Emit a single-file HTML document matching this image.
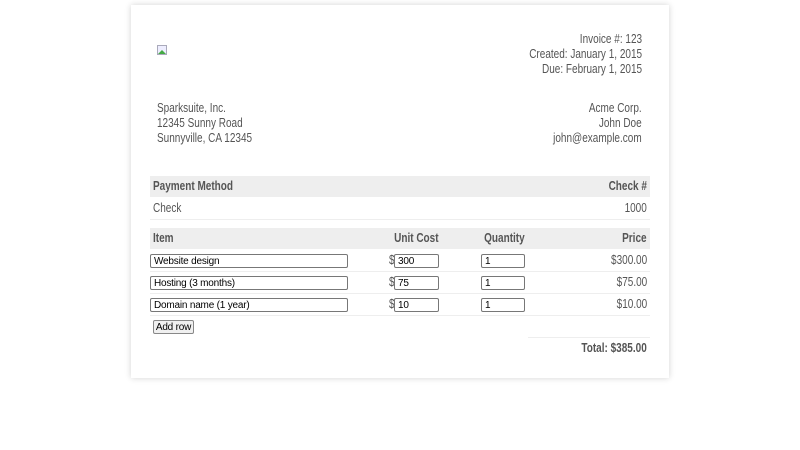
<!DOCTYPE html>
<html><head><style>
body{margin:0;width:800px;height:450px;background:#fff;font-family:"Liberation Sans",sans-serif;font-size:12.5px;color:#555;position:relative;overflow:hidden}
.box{position:absolute;left:131px;top:5px;width:538px;height:373px;box-shadow:0 0 6px rgba(0,0,0,.18);background:#fff}
.a{position:absolute;line-height:15px;white-space:nowrap;transform:scaleX(.8);transform-origin:left top}
.r{text-align:right;transform-origin:right top}
.b{font-weight:bold}
.bg{position:absolute;background:#eee}
.ln{position:absolute;height:1px;background:#eee}
input,button{position:absolute;box-sizing:border-box;font-family:"Liberation Sans",sans-serif;font-size:10px;color:#000;margin:0}
input{height:14px;border:1px solid #777;border-radius:2px;padding:0 3px;background:#fff;letter-spacing:-.2px}
button{height:14px;border:1px solid #888;border-radius:2px;background:#f0f0f0;padding:0;line-height:11px;white-space:nowrap;letter-spacing:-.2px}
</style></head><body>
<div class="box"></div>
<svg style="position:absolute;left:157px;top:45px" width="11" height="11"><rect x="0.5" y="0.5" width="9" height="9" fill="#eef" stroke="#aab"/><path d="M1 9l4-4 4 4z" fill="#4a4"/></svg>
<div class="a r" style="right:158px;top:32px">Invoice #: 123<br>Created: January 1, 2015<br>Due: February 1, 2015</div>
<div class="a" style="left:157px;top:101px">Sparksuite, Inc.<br>12345 Sunny Road<br>Sunnyville, CA 12345</div>
<div class="a r" style="right:158px;top:101px">Acme Corp.<br>John Doe<br>john@example.com</div>
<div class="bg" style="left:150px;top:176px;width:500px;height:21px"></div>
<div class="a b" style="left:153px;top:179px">Payment Method</div>
<div class="a b r" style="right:153px;top:179px">Check #</div>
<div class="a" style="left:153px;top:201px">Check</div>
<div class="a r" style="right:153px;top:201px">1000</div>
<div class="ln" style="left:150px;top:219px;width:500px"></div>
<div class="bg" style="left:150px;top:228px;width:500px;height:21px"></div>
<div class="a b" style="left:153px;top:231px">Item</div>
<div class="a b r" style="right:361px;top:231px">Unit Cost</div>
<div class="a b r" style="right:275px;top:231px">Quantity</div>
<div class="a b r" style="right:153px;top:231px">Price</div>

<input style="left:150px;top:254px;width:198px" value="Website design">
<div class="a" style="left:389px;top:253px">$</div>
<input style="left:394px;top:254px;width:45px" value="300">
<input style="left:481px;top:254px;width:44px" value="1">
<div class="a r" style="right:153px;top:253px">$300.00</div>
<div class="ln" style="left:150px;top:271px;width:500px"></div>

<input style="left:150px;top:276px;width:198px" value="Hosting (3 months)">
<div class="a" style="left:389px;top:275px">$</div>
<input style="left:394px;top:276px;width:45px" value="75">
<input style="left:481px;top:276px;width:44px" value="1">
<div class="a r" style="right:153px;top:275px">$75.00</div>
<div class="ln" style="left:150px;top:293px;width:500px"></div>

<input style="left:150px;top:298px;width:198px" value="Domain name (1 year)">
<div class="a" style="left:389px;top:297px">$</div>
<input style="left:394px;top:298px;width:45px" value="10">
<input style="left:481px;top:298px;width:44px" value="1">
<div class="a r" style="right:153px;top:297px">$10.00</div>
<div class="ln" style="left:150px;top:315px;width:500px"></div>

<button style="left:153px;top:320px;width:41px">Add row</button>
<div class="ln" style="left:528px;top:337px;width:122px"></div>
<div class="a b r" style="right:153px;top:341px">Total: $385.00</div>
</body></html>
